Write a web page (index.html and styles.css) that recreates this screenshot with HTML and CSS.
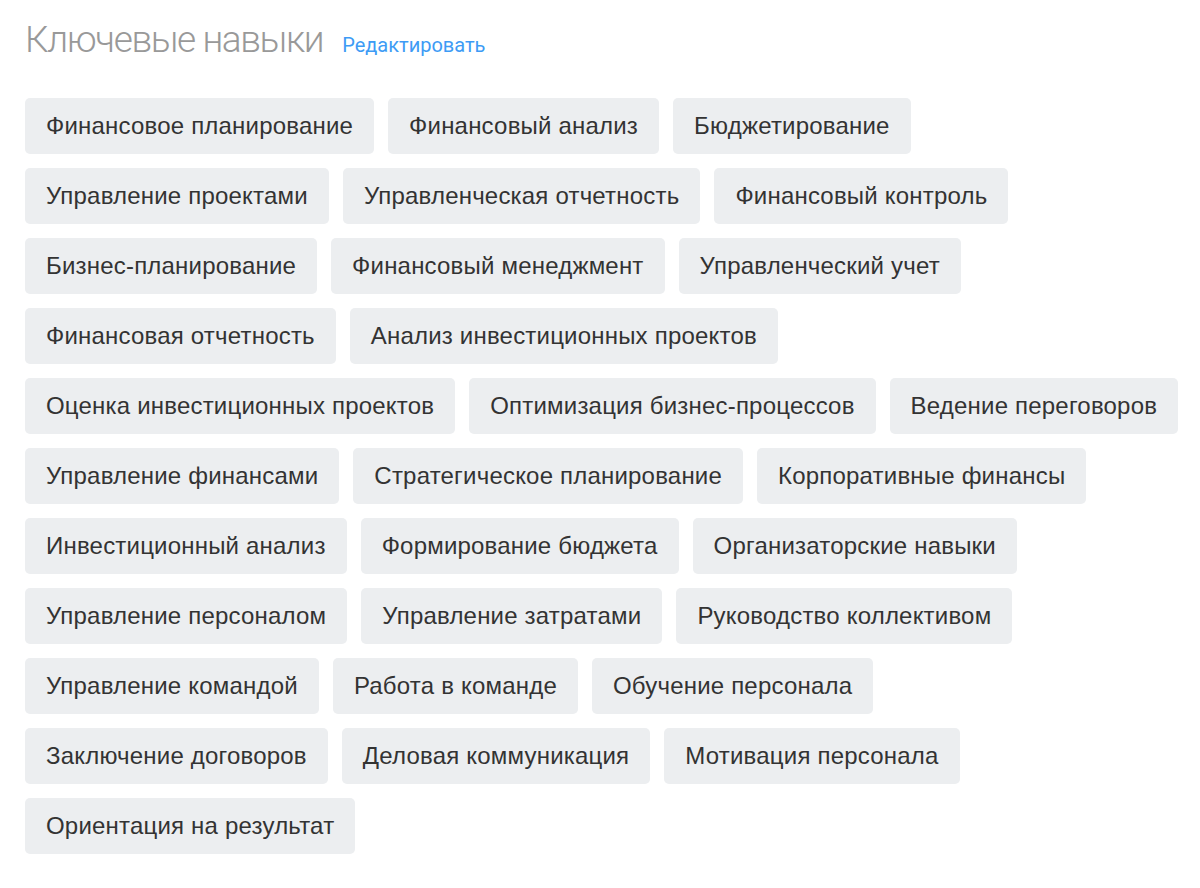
FILE: index.html
```html
<!DOCTYPE html>
<html lang="ru">
<head>
    <meta charset="UTF-8">
    <title>Ключевые навыки</title>
    <link rel="stylesheet" href="styles.css">
</head>
<body>
    <div class="skills">
        <div class="skills-header">
            <h2>Ключевые навыки</h2>
            <a href="#" class="edit-link">Редактировать</a>
        </div>
        <div class="tags">
            <span class="tag">Финансовое планирование</span>
            <span class="tag">Финансовый анализ</span>
            <span class="tag">Бюджетирование</span>
            <span class="tag">Управление проектами</span>
            <span class="tag">Управленческая отчетность</span>
            <span class="tag">Финансовый контроль</span>
            <span class="tag">Бизнес-планирование</span>
            <span class="tag">Финансовый менеджмент</span>
            <span class="tag">Управленческий учет</span>
            <span class="tag">Финансовая отчетность</span>
            <span class="tag">Анализ инвестиционных проектов</span>
            <span class="tag">Оценка инвестиционных проектов</span>
            <span class="tag">Оптимизация бизнес-процессов</span>
            <span class="tag">Ведение переговоров</span>
            <span class="tag">Управление финансами</span>
            <span class="tag">Стратегическое планирование</span>
            <span class="tag">Корпоративные финансы</span>
            <span class="tag">Инвестиционный анализ</span>
            <span class="tag">Формирование бюджета</span>
            <span class="tag">Организаторские навыки</span>
            <span class="tag">Управление персоналом</span>
            <span class="tag">Управление затратами</span>
            <span class="tag">Руководство коллективом</span>
            <span class="tag">Управление командой</span>
            <span class="tag">Работа в команде</span>
            <span class="tag">Обучение персонала</span>
            <span class="tag">Заключение договоров</span>
            <span class="tag">Деловая коммуникация</span>
            <span class="tag">Мотивация персонала</span>
            <span class="tag">Ориентация на результат</span>
        </div>
    </div>
</body>
</html>
```

FILE: styles.css
```css
* {
    box-sizing: border-box;
}

body {
    margin: 0;
    padding: 16px 10px 16px 25px;
    background-color: #fff;
    font-family: 'Liberation Sans', Arial, sans-serif;
    color: #333;
}

.skills-header {
    display: flex;
    align-items: baseline;
    gap: 19px;
    margin-bottom: 34px;
}

h2 {
    margin: 0;
    font-family: Roboto, 'Liberation Sans', sans-serif;
    font-weight: 300;
    font-size: 37px;
    letter-spacing: -1.4px;
    line-height: 48px;
    color: #999;
}

.edit-link {
    font-family: Roboto, 'Liberation Sans', sans-serif;
    font-size: 20px;
    color: #3d9bf5;
    text-decoration: none;
}

.tags {
    display: flex;
    flex-wrap: wrap;
    gap: 14px;
}

.tag {
    display: inline-block;
    height: 56px;
    line-height: 56px;
    padding: 0 21px;
    background-color: #eceef0;
    border-radius: 5px;
    font-size: 24px;
    letter-spacing: 0.2px;
    color: #333;
    white-space: nowrap;
}
```
